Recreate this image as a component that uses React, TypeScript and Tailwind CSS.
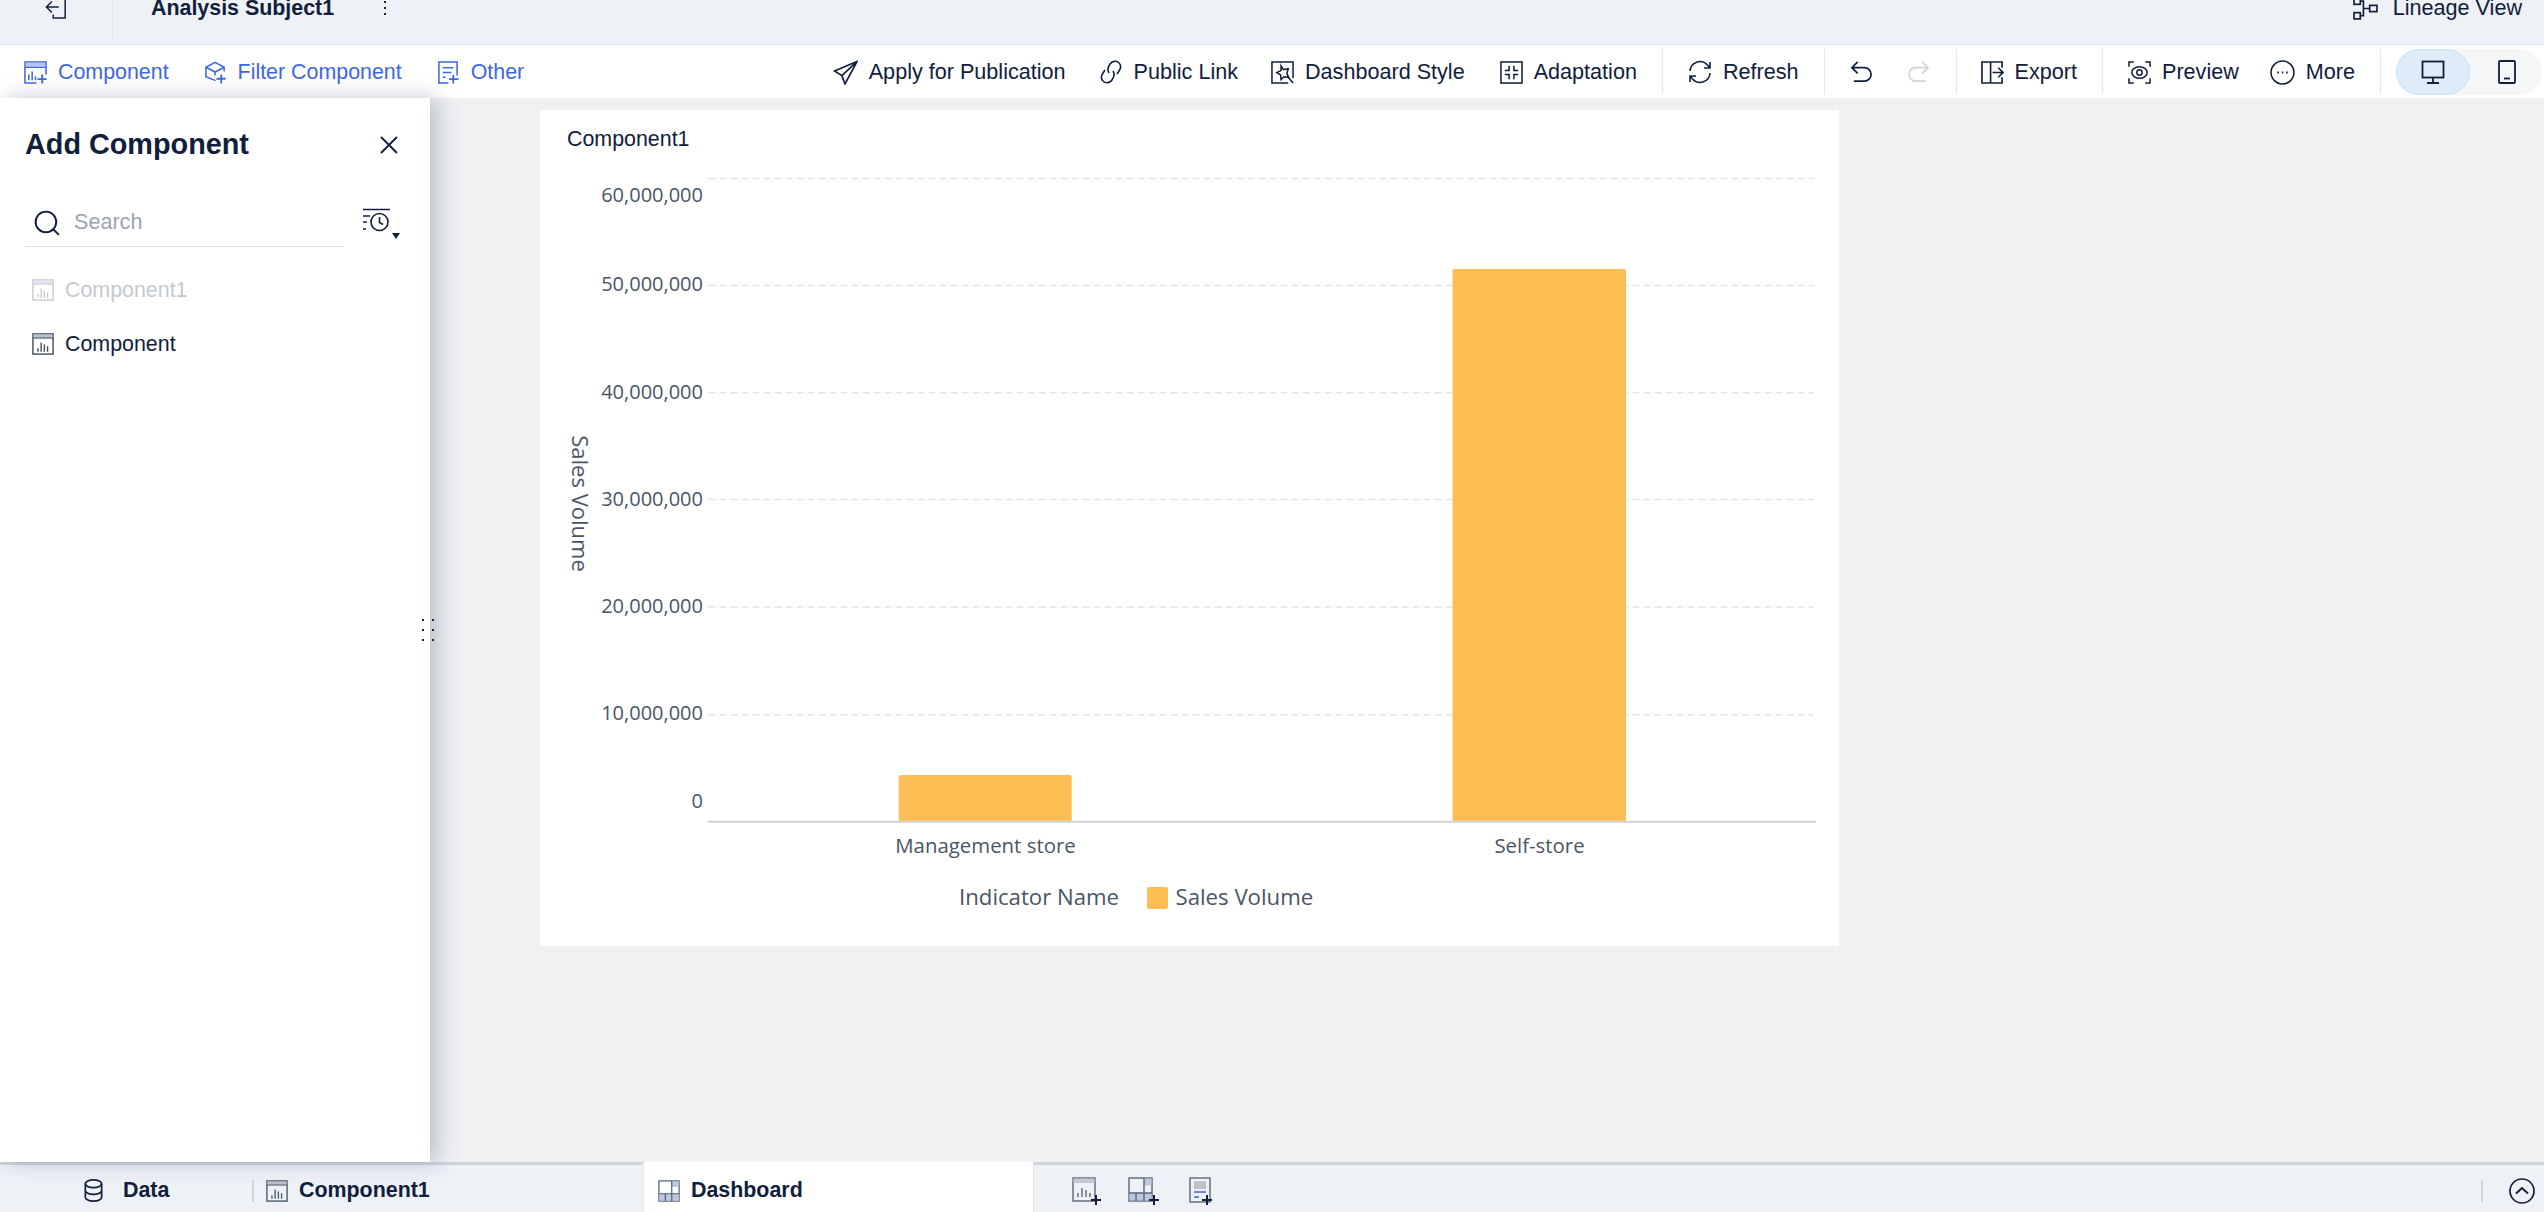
import type { ReactNode } from 'react';

const dark = '#10203c';
const blue = '#3f67e0';
const font = "'Liberation Sans', Arial, sans-serif";
const chartFont = "'Open Sans', 'Noto Sans', sans-serif";

function Ico({ size = 24, color = dark, sw = 1.6, children }: { size?: number; color?: string; sw?: number; children: ReactNode }) {
  return (
    <svg width={size} height={size} viewBox="0 0 24 24" fill="none" stroke={color} strokeWidth={sw} className="shrink-0">
      {children}
    </svg>
  );
}

function ChartBox({ size = 22, color = dark, head = '#b9c0cc', sw = 1.5 }: { size?: number; color?: string; head?: string; sw?: number }) {
  return (
    <Ico size={size} color={color} sw={sw}>
      <rect x="1" y="1" width="22" height="22" />
      <rect x="1.600" y="1.600" width="20.800" height="3.800" fill={head} stroke="none" />
      <path d="M1 5.500h22" strokeWidth="1.100" />
      <path d="M6.500 20.500v-4M10 20.500v-10M13.500 20.500v-8M17 20.500v-6" strokeWidth="1.500" />
    </Ico>
  );
}

function BlueComponentIcon() {
  return (
    <Ico color={blue} size={23} sw={1.6}>
      <path d="M13 23H1V1h22v13" />
      <path d="M1 6.500h22" />
      <rect x="1.800" y="1.800" width="20.400" height="4" fill="#b5c4f3" stroke="none" />
      <path d="M5 20v-6M8.500 20v-9M12 20v-4" />
      <path d="M19 14v9.500M14 19h9.500" strokeWidth="1.900" />
    </Ico>
  );
}

function BlueFilterIcon() {
  return (
    <Ico color={blue} size={23} sw={1.6}>
      <path d="M12 20.500 2 16.500V6.500L11.500 1.500l9.500 5V11" />
      <path d="M2 6.500l9.500 5 9.500-5M11.500 11.500V15" />
      <path d="M18 14v9.500M13 18.500h9.500" strokeWidth="1.900" />
    </Ico>
  );
}

function BlueOtherIcon() {
  return (
    <Ico color={blue} size={23} sw={1.6}>
      <path d="M12 23H2V1h19v14" />
      <path d="M6 7h11M6 12h9M6 17h3" />
      <path d="M17 14.500v9M12.500 19h10" strokeWidth="1.900" />
    </Ico>
  );
}

function ToolItem({
  icon,
  label,
  className = '',
  color = dark,
  textSize = 'text-[21.6px]',
}: {
  icon: ReactNode;
  label: string;
  className?: string;
  color?: string;
  textSize?: string;
}) {
  return (
    <div className={`flex items-center gap-[11px] whitespace-nowrap ${textSize} ${className}`} style={{ color }}>
      {icon}
      <span>{label}</span>
    </div>
  );
}

function Divider({ className = '' }: { className?: string }) {
  return <div className={`h-[45px] w-px bg-[#e6e8ec] shrink-0 ${className}`} />;
}

function DragDots() {
  return (
    <div className="absolute left-[422px] top-[521px] grid grid-cols-2 gap-x-[10px] gap-y-[8px]">
      {[0, 1, 2, 3, 4, 5].map((i) => (
        <div key={i} className="w-[2px] h-[2px] bg-[#14233f]" />
      ))}
    </div>
  );
}

const yTicks = [
  { label: '60,000,000', labelY: 84.7, gridY: 68.5 },
  { label: '50,000,000', labelY: 173, gridY: 175.5 },
  { label: '40,000,000', labelY: 281, gridY: 282.7 },
  { label: '30,000,000', labelY: 388, gridY: 389.5 },
  { label: '20,000,000', labelY: 495, gridY: 497 },
  { label: '10,000,000', labelY: 602.7, gridY: 604.7 },
  { label: '0', labelY: 690.7, gridY: -1 },
];

function Chart() {
  const txt = '#4b5565';
  return (
    <svg viewBox="0 42 1299 794" className="w-full flex-1" style={{ fontFamily: chartFont }}>
      {yTicks.map((t) => (
        <g key={t.label}>
          {t.gridY > 0 && <line x1="168.600" x2="1273.600" y1={t.gridY} y2={t.gridY} stroke="#e3e4e6" strokeWidth="1.500" strokeDasharray="7 4" />}
          <text x="163" y={t.labelY} textAnchor="end" dominantBaseline="central" fontSize="20" fill={txt}>
            {t.label}
          </text>
        </g>
      ))}
      <rect x="358.700" y="665" width="173" height="47" rx="2" fill="#ffbe54" />
      <rect x="912.500" y="159" width="173.500" height="553" rx="2" fill="#ffbe54" />
      <line x1="167.600" x2="1276" y1="711.700" y2="711.700" stroke="#cfd2d6" strokeWidth="2" />
      <text x="445.500" y="735" textAnchor="middle" dominantBaseline="central" fontSize="20.400" fill={txt}>Management store</text>
      <text x="999.500" y="735" textAnchor="middle" dominantBaseline="central" fontSize="20.400" fill={txt}>Self-store</text>
      <text x="40.500" y="393.500" textAnchor="middle" dominantBaseline="central" fontSize="22" fill={txt} transform="rotate(90 40.500 393.500)">Sales Volume</text>
      <text x="419" y="786.500" dominantBaseline="central" fontSize="22.200" fill={txt}>Indicator Name</text>
      <rect x="607" y="777" width="21" height="22" rx="2" fill="#ffbe54" />
      <text x="635.500" y="786.500" dominantBaseline="central" fontSize="22.200" fill={txt}>Sales Volume</text>
    </svg>
  );
}

export default function App() {
  return (
    <div className="w-[2544px] h-[1212px] flex flex-col overflow-hidden bg-[#f0f1f3]" style={{ fontFamily: font, color: dark }}>
      {/* top strip, page is scrolled a bit so content is cut at the top */}
      <div className="h-[45px] shrink-0 bg-[#eef1f6] border-b border-[#e3e6ec] flex items-start overflow-hidden">
        <div className="w-[113px] h-[44px] border-r border-[#e4e7ed] shrink-0 pl-[45px]">
          <div className="h-[16px] flex items-center">
            <Ico size={22} sw={1.6}>
              <path d="M8 1h14v22H9v-4" />
              <path d="M15 11H2M7.500 5 1.500 11l6 6" />
            </Ico>
          </div>
        </div>
        <div className="h-[16px] flex items-center flex-1">
          <span className="ml-[38px] text-[21.4px] leading-[16px] font-bold whitespace-nowrap">Analysis Subject1</span>
          <div className="ml-[50px] flex flex-col gap-[4px]">
            <div className="w-[2px] h-[2px] bg-[#10203c]" />
            <div className="w-[2px] h-[2px] bg-[#10203c]" />
            <div className="w-[2px] h-[2px] bg-[#10203c]" />
          </div>
          <div className="ml-auto mr-[22px] flex items-center gap-[15px]">
            <Ico size={25} sw={1.6}>
              <rect x="1" y="2" width="6" height="6" />
              <rect x="1" y="16" width="6" height="6" />
              <rect x="16" y="9" width="7" height="6" />
              <path d="M7 5h3v14H7M10 12h6" />
            </Ico>
            <span className="text-[21.6px] leading-[16px] whitespace-nowrap">Lineage View</span>
          </div>
        </div>
      </div>

      {/* toolbar */}
      <div className="h-[53px] shrink-0 bg-white flex items-center pl-[24px] pr-[2px]">
        <div className="flex items-center pt-[2px]">
          <ToolItem icon={<BlueComponentIcon />} label="Component" color={blue} textSize="text-[21.4px]" />
          <ToolItem icon={<BlueFilterIcon />} label="Filter Component" color={blue} textSize="text-[21.4px]" className="ml-[35px]" />
          <ToolItem icon={<BlueOtherIcon />} label="Other" color={blue} textSize="text-[21.4px]" className="ml-[35px]" />
        </div>

        <div className="ml-auto flex items-center">
          <ToolItem
            label="Apply for Publication"
            className="pt-[2px]"
            icon={
              <Ico size={25} sw={1.6}>
                <path d="M23 1.500 1.500 10.500l7 4.500 3 8zM23 1.500 8.500 15" />
              </Ico>
            }
          />
          <ToolItem
            label="Public Link"
            className="ml-[33px] pt-[2px]"
            icon={
              <Ico size={24} sw={1.6}>
                <path d="M10 13C8 10 9 7 11 4c2-3 6-3.500 8.500-1.500C22 4.500 22 8 20 11l-2 3" />
                <path d="M14 11c2 3 1 6-1 9-2 3-6 3.500-8.500 1.500C2 19.500 2 16 4 13l2-3" />
              </Ico>
            }
          />
          <ToolItem
            label="Dashboard Style"
            className="ml-[33px] pt-[2px]"
            icon={
              <Ico size={23} sw={1.6}>
                <path d="M18 23H1V1h22v17" />
                <path d="m10.500 5 2.500 4 5-1-1.500 5 2 4-5-.5-3 3-.5-5-4-2.500 4.500-2z" />
                <path d="m17 16 6 7" />
              </Ico>
            }
          />
          <ToolItem
            label="Adaptation"
            className="ml-[35px] pt-[2px]"
            icon={
              <Ico size={23} sw={1.6}>
                <rect x="1" y="1" width="22" height="22" />
                <path d="M9.500 5v5H5M14.500 5v5H19M9.500 19v-5H5M14.500 19v-5H19" />
              </Ico>
            }
          />
          <Divider className="ml-[25px]" />
          <ToolItem
            label="Refresh"
            className="ml-[25px] pt-[2px]"
            icon={
              <Ico size={24} sw={1.6}>
                <path d="M2 11a10 10 0 0 1 17.500-6l2 2.500M22 2v6h-6" />
                <path d="M22 13a10 10 0 0 1-17.500 6l-2-2.500M2 22v-6h6" />
              </Ico>
            }
          />
          <Divider className="ml-[25px]" />
          <div className="ml-[25px]">
            <Ico size={23} sw={1.8}>
              <path d="M8 2 2 8l6 6M2 8h13a6.500 6.500 0 0 1 0 14H4" />
            </Ico>
          </div>
          <div className="ml-[34px]">
            <Ico size={23} sw={1.8} color="#d1d5db">
              <path d="M16 2l6 6-6 6M22 8H9a6.500 6.500 0 0 0 0 14h11" />
            </Ico>
          </div>
          <Divider className="ml-[26px]" />
          <ToolItem
            label="Export"
            className="ml-[24px] pt-[2px]"
            icon={
              <Ico size={23} sw={1.7}>
                <path d="M10 1H1v22h9zM10 1h12v6M10 23h12v-6" />
                <path d="M12 12h11M18 7l5 5-5 5" />
              </Ico>
            }
          />
          <Divider className="ml-[25px]" />
          <ToolItem
            label="Preview"
            className="ml-[25px] pt-[2px]"
            icon={
              <Ico size={23} sw={1.6}>
                <path d="M1 6V1h5M18 1h5v5M23 18v5h-5M6 23H1v-5" />
                <ellipse cx="12" cy="12" rx="8" ry="6" />
                <circle cx="12" cy="12" r="2.800" />
              </Ico>
            }
          />
          <ToolItem
            label="More"
            className="ml-[31px] pt-[2px]"
            icon={
              <Ico size={25} sw={1.5}>
                <circle cx="12" cy="12" r="11" />
                <path d="M7 12h1.500M11.300 12h1.500M15.500 12h1.500" strokeWidth="2" />
              </Ico>
            }
          />
          <Divider className="ml-[25px]" />
          <div className="ml-[15px] w-[146px] h-[46px] rounded-[23px] bg-[#f5f6f8] flex items-center">
            <div className="w-[74px] h-[46px] rounded-[23px] bg-[#deebf9] border border-[#c6e4f6] flex items-center justify-center">
              <Ico size={24} sw={1.8}>
                <rect x="1.500" y="1.500" width="21" height="16" />
                <path d="M12 18v5M6 23h12" />
              </Ico>
            </div>
            <div className="flex-1 flex items-center justify-center pl-[1px]">
              <Ico size={24} sw={1.8}>
                <rect x="4" y="1" width="16" height="22" rx="1" />
                <path d="M9 18.500h6" />
              </Ico>
            </div>
          </div>
        </div>
      </div>

      {/* main */}
      <div className="flex-1 min-h-0 flex">
        <div className="w-[430px] shrink-0 bg-white relative z-10 shadow-[8px_0_20px_rgba(90,100,130,0.35)] pl-[25px] pr-[30px]">
          <div className="h-[92px] flex items-center justify-between pt-[2px]">
            <span className="text-[28.8px] font-bold">Add Component</span>
            <svg width="18" height="18" viewBox="0 0 18 18" fill="none" stroke={dark} strokeWidth="1.900" className="mr-[2px]">
              <path d="M1 1l16 16M17 1 1 17" />
            </svg>
          </div>
          <div className="flex items-start mt-[3px]">
            <div className="w-[320px] h-[54px] border-b border-[#dcdfe4] flex items-center pl-[9px] pt-[6px]">
              <Ico size={26} sw={1.8}>
                <circle cx="11" cy="11" r="9.500" />
                <path d="m18 18 5 5" />
              </Ico>
              <span className="ml-[14px] text-[21.6px] text-[#9ca3af]">Search</span>
            </div>
            <div className="ml-[18px] mt-[15px] flex items-end">
              <svg width="30" height="24" viewBox="0 0 30 24" fill="none" stroke={dark} strokeWidth="1.600">
                <path d="M1 1.500h27M1 8h7M1 14h4M1 21h3" />
                <circle cx="17.500" cy="14" r="8.500" />
                <path d="M17.500 9v5.500l3.500 2" />
              </svg>
              <div className="w-0 h-0 border-l-[4px] border-r-[4px] border-t-[6px] border-l-transparent border-r-transparent border-t-[#10203c] -mb-[7px]" />
            </div>
          </div>
          <div className="mt-[16px] flex flex-col pl-[7px]">
            <div className="h-[54px] flex items-center gap-[11px] text-[21.4px] text-[#c4c9d1]">
              <ChartBox color="#c4c9d1" head="#e3e5e9" />
              <span>Component1</span>
            </div>
            <div className="h-[54px] flex items-center gap-[11px] text-[21.4px]">
              <ChartBox color="#3d4a5c" />
              <span>Component</span>
            </div>
          </div>
          <DragDots />
        </div>

        <div className="flex-1 min-w-0 pl-[110px] pt-[12px]">
          <div className="w-[1299px] h-[836px] bg-white flex flex-col">
            <div className="h-[42px] shrink-0 pl-[27px] pt-[16px] text-[21.4px] leading-[26px]">Component1</div>
            <Chart />
          </div>
        </div>
      </div>

      {/* bottom tabs */}
      <div className="h-[50px] shrink-0 bg-[#eef1f6] border-t-[3px] border-[#cfd3da] flex items-center text-[21.4px] font-bold relative">
        <div className="w-[252px] h-full flex items-center pl-[82px] pt-[4px]">
          <Ico size={23} sw={1.8}>
            <ellipse cx="12" cy="5" rx="8.500" ry="4" />
            <path d="M3.500 5v14c0 2.200 3.800 4 8.500 4s8.500-1.800 8.500-4V5M3.500 12c0 2.200 3.800 4 8.500 4s8.500-1.800 8.500-4" />
          </Ico>
          <span className="ml-[18px]">Data</span>
        </div>
        <div className="w-[2px] h-[22px] bg-[#cfd3da] shrink-0 mt-[4px]" />
        <div className="w-[389px] h-full flex items-center pl-[12px] pt-[4px]">
          <ChartBox color="#4d5a6c" />
          <span className="ml-[11px]">Component1</span>
        </div>
        <div className="w-[391px] h-[50px] -mt-[3px] pt-[7px] bg-white border-x border-[#e3e6ec] flex items-center pl-[14px]">
          <Ico size={22} color="#4a5d80" sw={1.3}>
            <rect x="1" y="1" width="22" height="22" />
            <rect x="1.500" y="15" width="21" height="7.500" fill="#bcc6dc" stroke="none" />
            <rect x="15" y="1.500" width="7.500" height="6" fill="#bcc6dc" stroke="none" />
            <path d="M1 15h22M15 1v22M8 15v8" />
          </Ico>
          <span className="ml-[11px]">Dashboard</span>
        </div>
        <div className="ml-[38px] flex items-center pt-[4px]">
          <svg width="30" height="28" viewBox="0 0 30 28" fill="none" stroke="#5a6678" strokeWidth="1.400">
            <rect x="1" y="1" width="22" height="23" />
            <rect x="1.500" y="1.500" width="21" height="4.500" fill="#c4c9d3" stroke="none" />
            <path d="M6 20v-4M10 20v-9M14 20v-7M18 20v-4" />
            <path d="M24 18v10M19 23h10" stroke={dark} strokeWidth="2" />
          </svg>
          <svg width="32" height="28" viewBox="0 0 32 28" fill="none" stroke="#5a6678" strokeWidth="1.400" className="ml-[26px]">
            <rect x="1" y="1" width="23" height="23" />
            <rect x="1.500" y="16" width="22" height="7.500" fill="#bcc6dc" stroke="none" />
            <rect x="16" y="1.500" width="7.500" height="7" fill="#bcc6dc" stroke="none" />
            <path d="M1 16h23M16 1v23M8 16v8" />
            <path d="M26 18v10M21 23h10" stroke={dark} strokeWidth="2" />
          </svg>
          <svg width="24" height="28" viewBox="0 0 24 28" fill="none" stroke="#5a6678" strokeWidth="1.400" className="ml-[29px]">
            <rect x="1" y="1" width="20" height="24" />
            <rect x="5" y="4" width="12" height="8" fill="#bcc1cb" stroke="none" />
            <path d="M5 15h12M5 20h5" stroke="#6d86c8" strokeWidth="2" />
            <path d="M18 18v10M13 23h10" stroke={dark} strokeWidth="2" />
          </svg>
        </div>
        <div className="ml-auto mr-[9px] flex items-center gap-[26px] pt-[4px]">
          <div className="w-[2px] h-[22px] bg-[#cfd3da]" />
          <svg width="26" height="26" viewBox="0 0 26 26" fill="none" stroke={dark} strokeWidth="1.700">
            <circle cx="13" cy="13" r="12" />
            <path d="m7 15.500 6-5.500 6 5.500" strokeWidth="2" />
          </svg>
        </div>
      </div>
    </div>
  );
}
